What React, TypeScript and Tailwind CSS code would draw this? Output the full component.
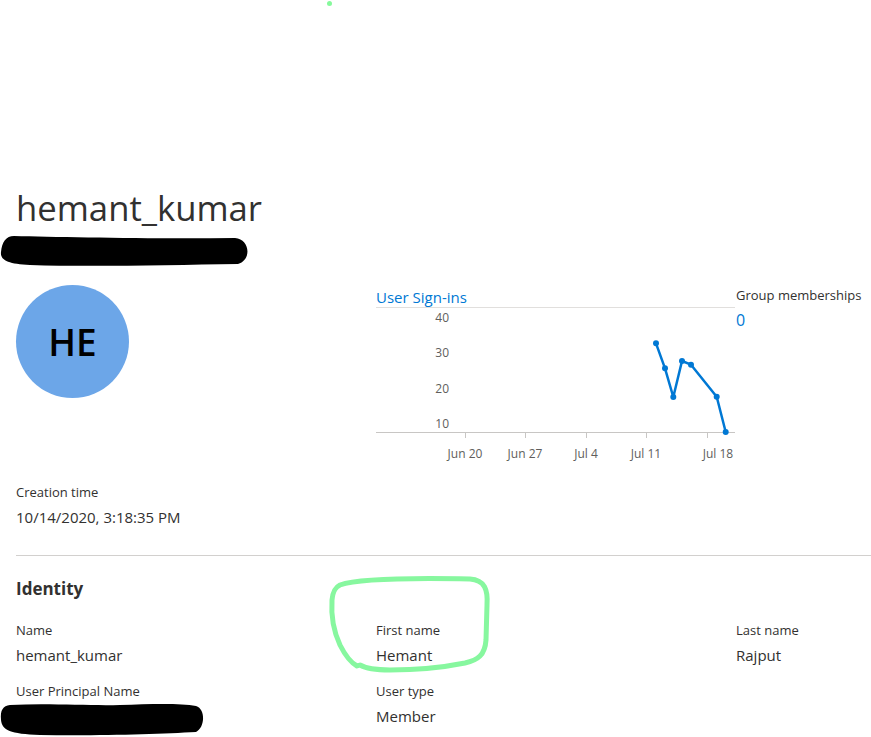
import React from "react";

const font = { fontFamily: '"Open Sans", "Noto Sans", sans-serif' };

function Chart() {
  const pts: [number, number][] = [
    [280, 36.3],
    [289, 61.3],
    [297.3, 90],
    [306, 54],
    [315, 57.7],
    [340.7, 89.7],
    [349.7, 125],
  ];
  const yLabels = [
    { t: "40", y: 15 },
    { t: "30", y: 50 },
    { t: "20", y: 86 },
    { t: "10", y: 121 },
  ];
  const xTicks = [
    { t: "Jun 20", x: 89, lx: 89 },
    { t: "Jun 27", x: 149, lx: 149 },
    { t: "Jul 4", x: 210, lx: 210 },
    { t: "Jul 11", x: 270, lx: 270 },
    { t: "Jul 18", x: 331, lx: 342 },
  ];
  return (
    <svg width="360" height="160" viewBox="0 0 360 160" className="block">
      <line x1="0" y1="0.5" x2="359" y2="0.5" stroke="#e1dfdd" strokeWidth="1" />
      {yLabels.map((l) => (
        <text key={l.t} x="73" y={l.y} textAnchor="end" fontSize="12" fill="#605e5c" style={font}>
          {l.t}
        </text>
      ))}
      <line x1="0" y1="125.5" x2="359" y2="125.5" stroke="#c8c6c4" strokeWidth="1" />
      {xTicks.map((t) => (
        <g key={t.t}>
          <line x1={t.x + 0.5} y1="125" x2={t.x + 0.5} y2="131" stroke="#c8c6c4" strokeWidth="1" />
          <text x={t.lx} y="151" textAnchor="middle" fontSize="12" fill="#605e5c" style={font}>
            {t.t}
          </text>
        </g>
      ))}
      <polyline
        points={pts.map((p) => p.join(",")).join(" ")}
        fill="none"
        stroke="#0078d4"
        strokeWidth="2.5"
        strokeLinejoin="round"
      />
      {pts.map((p, i) => (
        <circle key={i} cx={p[0]} cy={p[1]} r="3" fill="#0078d4" />
      ))}
    </svg>
  );
}

function Field({ label, value }: { label: string; value?: string }) {
  return (
    <div className="flex flex-col">
      <div className="text-[13px] leading-[20px] text-[#323130]">{label}</div>
      <div className="mt-[4px] h-[22px] text-[15px] leading-[22px] text-[#323130]">{value}</div>
    </div>
  );
}

export default function App() {
  return (
    <div className="relative w-[871px] h-[737px] overflow-hidden bg-white" style={font}>
      <div className="absolute left-[327px] top-[1px] h-[5px] w-[5px] rounded-full bg-[#86f99c]" />

      <div className="pt-[186px]">
        <div className="pl-[16px] text-[34.7px] leading-[44px] text-[#323130]">hemant_kumar</div>
        <svg width="250" height="34" viewBox="0 0 250 34" className="block mt-[4px]">
          <path
            d="M14 2 C 60 3, 150 5, 235 4 C 250 5, 252 26, 238 30 C 170 31, 90 33, 30 31 C 8 30, 0 26, 1 18 C 2 8, 6 2, 14 2 Z"
            fill="#000"
          />
        </svg>

        <div className="grid grid-cols-[360px_360px_1fr] pl-[16px] mt-[17px]">
          <div>
            <div className="flex h-[113px] w-[113px] items-center justify-center rounded-full bg-[#6ca6e8] text-[37px] font-semibold text-black">
              HE
            </div>
          </div>
          <div className="pt-[2px]">
            <div className="text-[15px] leading-[20px] text-[#0078d4]">User Sign-ins</div>
            <Chart />
          </div>
          <div>
            <div className="text-[13px] leading-[20px] text-[#323130]">Group memberships</div>
            <div className="mt-[4px] text-[16px] leading-[22px] text-[#0078d4]">0</div>
          </div>
        </div>

        <div className="pl-[16px] mt-[15px]">
          <Field label="Creation time" value="10/14/2020, 3:18:35 PM" />
        </div>

        <div className="ml-[16px] mt-[27px] h-px bg-[#d2d0ce]" />

        <div className="pl-[16px] mt-[21px] text-[17px] leading-[24px] font-bold text-[#323130]">Identity</div>

        <div className="grid grid-cols-[360px_360px_1fr] gap-y-[15px] pl-[16px] mt-[19px]">
          <Field label="Name" value="hemant_kumar" />
          <Field label="First name" value="Hemant" />
          <Field label="Last name" value="Rajput" />
          <Field label="User Principal Name" />
          <Field label="User type" value="Member" />
          <div />
        </div>
      </div>

      <svg className="absolute left-0 top-[700px]" width="210" height="37" viewBox="0 0 210 37">
        <path
          d="M10 5 C 50 3, 90 6, 120 5 C 150 4, 180 3, 196 6 C 206 9, 205 28, 196 32 C 160 34, 100 36, 40 35 C 10 34, 2 30, 1 20 C 0 10, 3 6, 10 5 Z"
          fill="#000"
        />
      </svg>

      <svg className="absolute left-0 top-0 pointer-events-none" width="871" height="737" viewBox="0 0 871 737">
        <path
          d="M340 585 C 360 578, 420 578, 470 579 C 485 580, 488 590, 487 605 L 486 640 C 485 655, 478 660, 465 663 C 440 668, 410 670, 390 670 C 375 670, 365 668, 360 665 L 357 666 C 350 662, 345 655, 340 645 C 333 630, 331 615, 332 600 C 333 590, 336 587, 340 585 Z"
          fill="none"
          stroke="#87f79f"
          strokeWidth="5"
          strokeLinecap="round"
          strokeLinejoin="round"
        />
      </svg>
    </div>
  );
}
